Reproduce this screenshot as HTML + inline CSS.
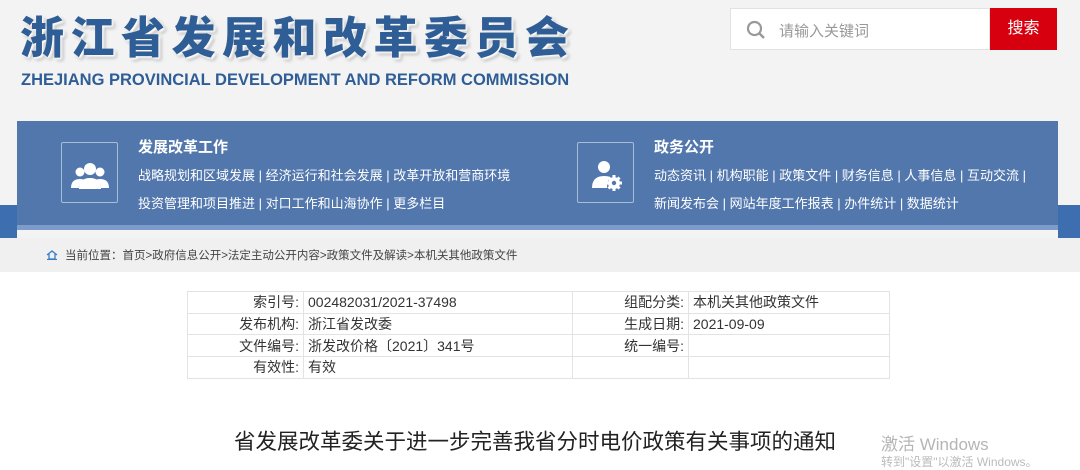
<!DOCTYPE html>
<html><head><meta charset="utf-8"><style>
*{margin:0;padding:0;box-sizing:border-box}
body{width:1080px;height:463px;overflow:hidden;background:#fff;font-family:"Liberation Sans","Noto Sans CJK SC",sans-serif;position:relative}
.hdr{position:absolute;left:0;top:0;width:1080px;height:238px;background:#f3f3f3}
.t1{position:absolute;left:20px;top:2px;font-size:44px;font-weight:900;color:#2f5e96;letter-spacing:6.5px;text-shadow:2px 2px 2px #fff,3px 3px 3px #aaa;white-space:nowrap}
.t2{position:absolute;left:21px;top:71px;font-size:16.5px;font-weight:bold;color:#2f5e96;white-space:nowrap}
.search{position:absolute;left:730px;top:8px;width:260px;height:42px;background:#fff;border:1px solid #e2e2e2}
.search span{position:absolute;left:48px;top:11px;font-size:15px;color:#999}
.btn{position:absolute;left:990px;top:8px;width:67px;height:42px;background:#d7000f;color:#fff;font-size:16px;text-align:center;line-height:42px}
.dk{position:absolute;top:205px;height:33px;background:#3d6fb0}
.ban{position:absolute;left:17px;top:121px;width:1041px;height:104px;background:#5277ad}
.sh{position:absolute;left:17px;top:225px;width:1041px;height:5px;background:#7d9ccc}
.ib{position:absolute;top:21px;width:57px;height:61px;border:1px solid #a9bcd8;border-radius:2px}
.h{position:absolute;color:#fff;font-size:15px;font-weight:bold}
.l{position:absolute;color:#fff;font-size:13px;white-space:nowrap}
.bc{position:absolute;left:0;top:238px;width:1080px;height:34px;background:#f0f0f0;font-size:11.5px;color:#444;line-height:36px;padding-left:65px}
table{position:absolute;left:187px;top:291px;width:703px;border-collapse:collapse;font-size:14px;color:#333}
td{border:1px solid #e3e3e3;height:21.7px;padding:0 4px}
td.k{text-align:right}
.title{position:absolute;left:234px;top:425px;font-size:21.5px;color:#222;white-space:nowrap}
.wm{position:absolute;left:881px;top:430px;font-size:17px;color:#b5b5b5}
.wm2{position:absolute;left:881px;top:453px;font-size:12px;color:#bbb;white-space:nowrap}
</style></head><body>
<div class="hdr"></div>
<div class="t1">浙江省发展和改革委员会</div>
<div class="t2">ZHEJIANG PROVINCIAL DEVELOPMENT AND REFORM COMMISSION</div>
<div class="search"><svg style="position:absolute;left:15px;top:11px" width="20" height="20" viewBox="0 0 20 20"><circle cx="8.5" cy="8.5" r="6.5" fill="none" stroke="#999" stroke-width="2.2"/><path d="M13 13l5 5" stroke="#999" stroke-width="2.4"/></svg><span>请输入关键词</span></div>
<div class="btn">搜索</div>
<div class="dk" style="left:0;width:17px"></div>
<div class="dk" style="left:1058px;width:22px"></div>
<div class="sh"></div>
<div class="ban">
<div class="ib" style="left:44px"><svg width="57" height="61" viewBox="0 0 57 61"><g fill="#fff"><circle cx="28" cy="26" r="6"/><path d="M17 46q0-11 11-11t11 11z"/><circle cx="18" cy="29" r="4.5"/><path d="M9 45q0-9 9-9 3 0 4 1-5 3-5 8z"/><circle cx="38" cy="29" r="4.5"/><path d="M47 45q0-9-9-9-3 0-4 1 5 3 5 8z"/></g></svg></div>
<div class="h" style="left:121px;top:15px">发展改革工作</div>
<div class="l" style="left:121px;top:44px">战略规划和区域发展 | 经济运行和社会发展 | 改革开放和营商环境</div>
<div class="l" style="left:121px;top:72px">投资管理和项目推进 | 对口工作和山海协作 | 更多栏目</div>
<div class="ib" style="left:560px"><svg width="57" height="61" viewBox="0 0 57 61"><g fill="#fff"><circle cx="26" cy="24" r="6"/><path d="M14 45q0-12 12-12 4 0 6 1-3 4-3 11z"/><circle cx="36" cy="40" r="6"/></g><g stroke="#fff" stroke-width="3"><path d="M36 32v16M28 40h16M30.5 34.5l11 11M41.5 34.5l-11 11"/></g><circle cx="36" cy="40" r="2.2" fill="#5277ad"/></svg></div>
<div class="h" style="left:637px;top:15px">政务公开</div>
<div class="l" style="left:637px;top:44px">动态资讯 | 机构职能 | 政策文件 | 财务信息 | 人事信息 | 互动交流 |</div>
<div class="l" style="left:637px;top:72px">新闻发布会 | 网站年度工作报表 | 办件统计 | 数据统计</div>
</div>
<div class="bc"><svg style="position:absolute;left:46px;top:12px" width="12" height="10" viewBox="0 0 12 10"><path d="M1 5L6 1l5 4M3 4v5h6V4M1 9.5h10" fill="none" stroke="#3a7bc8" stroke-width="1.3"/></svg>当前位置：首页&gt;政府信息公开&gt;法定主动公开内容&gt;政策文件及解读&gt;本机关其他政策文件</div>
<table>
<tr><td class="k" style="width:116px">索引号:</td><td style="width:269px">002482031/2021-37498</td><td class="k" style="width:116px">组配分类:</td><td>本机关其他政策文件</td></tr>
<tr><td class="k">发布机构:</td><td>浙江省发改委</td><td class="k">生成日期:</td><td>2021-09-09</td></tr>
<tr><td class="k">文件编号:</td><td>浙发改价格〔2021〕341号</td><td class="k">统一编号:</td><td></td></tr>
<tr><td class="k">有效性:</td><td>有效</td><td></td><td></td></tr>
</table>
<div class="title">省发展改革委关于进一步完善我省分时电价政策有关事项的通知</div>
<div class="wm">激活 Windows</div>
<div class="wm2">转到"设置"以激活 Windows。</div>
</body></html>
